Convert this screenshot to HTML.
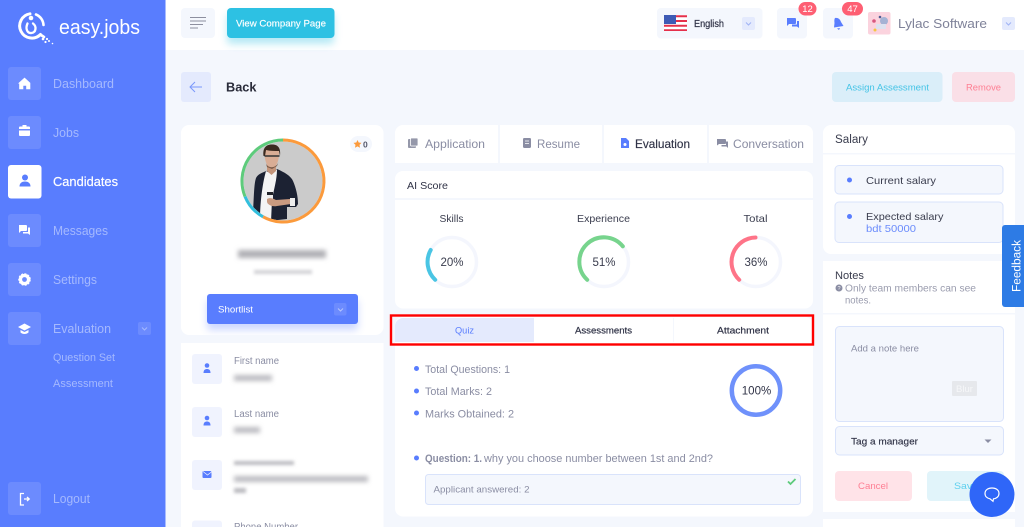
<!DOCTYPE html>
<html><head><meta charset="utf-8"><title>easy.jobs</title>
<style>
html,body{margin:0;padding:0;width:1024px;height:527px;overflow:hidden;background:#f4f7fd}
svg{display:block;font-family:"Liberation Sans",sans-serif}
.s{fill:#a5b9fe;font-size:12.5px}
.g{fill:#8a8da3}
.d{fill:#2f3246}
</style></head><body>
<svg width="1024" height="527" viewBox="0 0 1024 527" xmlns="http://www.w3.org/2000/svg">
<defs>
<filter id="b" x="-40%" y="-200%" width="180%" height="500%"><feGaussianBlur stdDeviation="2.4"/></filter>
<filter id="b1" x="-40%" y="-200%" width="180%" height="500%"><feGaussianBlur stdDeviation="1.6"/></filter>
<filter id="sh" x="-30%" y="-50%" width="160%" height="220%"><feGaussianBlur stdDeviation="4"/></filter>
<clipPath id="av"><circle cx="283" cy="181" r="39.500"/></clipPath>
<clipPath id="fl"><rect x="664" y="15" width="23" height="16"/></clipPath>
</defs>
<rect width="1024" height="527" fill="#f4f7fd"/>
<rect width="1024" height="50" fill="#fff"/>
<!-- sidebar -->
<rect width="165" height="527" fill="#597dfe"/>
<rect x="165" width="1" height="527" fill="#a9bcfd"/>
<g fill="none" stroke="#fff" stroke-linecap="round">
<path d="M30 13.800 A12.200 12.200 0 1 0 40.500 34.500" stroke-width="3"/>
<path d="M36 14.500 A12.200 12.200 0 0 1 43.500 25" stroke-width="2.600"/>
<path d="M27.500 23.500 C25 29 27.500 33.500 31.500 33 C36 32.500 37 26.500 33 23.500" stroke-width="2.300"/>
<path d="M41 35 L44 37" stroke-width="2.600"/>
</g>
<g fill="#fff"><circle cx="31" cy="18" r="2.300"/><circle cx="43" cy="39" r="1.300"/><circle cx="47" cy="39" r="1.100"/><circle cx="45.500" cy="42" r="1.100"/><circle cx="49" cy="41" r="1"/><circle cx="52.500" cy="43.500" r=".8"/></g>
<text x="59" y="34" fill="#fff" font-size="20" textLength="81" lengthAdjust="spacingAndGlyphs">easy.jobs</text>

<g fill="#6c8bfe">
<rect x="8" y="67" width="33" height="33" rx="3"/><rect x="8" y="116" width="33" height="33" rx="3"/>
<rect x="8" y="214" width="33" height="33" rx="3"/><rect x="8" y="263" width="33" height="33" rx="3"/>
<rect x="8" y="312" width="33" height="33" rx="3"/><rect x="8" y="482" width="33" height="33" rx="3"/>
</g>
<rect x="8" y="165" width="33.500" height="33.500" rx="3" fill="#fff"/>
<path d="M24.500 78 L30 83 V89 H26.500 V85.500 H23 V89 H19.500 V83 L18.500 83.500 Z" fill="#fff" stroke="#fff" stroke-width=".6"/>
<path d="M19 129 h11 v-1.500 a1 1 0 0 0 -1 -1 h-2.500 v-1.500 h-4 v1.500 h-2.500 a1 1 0 0 0 -1 1 Z M19 130.500 h11 v4.500 a1 1 0 0 1 -1 1 h-9 a1 1 0 0 1 -1 -1Z" fill="#fff"/>
<circle cx="25" cy="177.500" r="3" fill="#597dfe"/><path d="M19.500 186.500 c0-3.500 2.500-5 5.500-5 s5.500 1.500 5.500 5 Z" fill="#597dfe"/>
<path d="M19 225 h7 a1 1 0 0 1 1 1 v4 a1 1 0 0 1 -1 1 h-5 l-2 2 Z" fill="#fff"/><path d="M28 227.500 h2 v7.500 l-2 -1.500 h-5 v-1.500 h5Z" fill="#fff"/>
<circle cx="24.500" cy="279.500" r="4" fill="none" stroke="#fff" stroke-width="3.200"/><circle cx="24.500" cy="279.500" r="5.500" fill="none" stroke="#fff" stroke-width="1.500" stroke-dasharray="2 1.200"/>
<path d="M24.500 323.500 L31 327 L24.500 330.500 L18 327 Z" fill="#fff"/><path d="M20.500 330 v2.500 c2 2 6 2 8 0 v-2.500 l-4 2 Z" fill="#fff"/>
<path d="M24 493.500 h-3.500 v11.500 h3.500" fill="none" stroke="#fff" stroke-width="1.300"/><path d="M24 499 h5 M27 497 l2.200 2 -2.200 2" fill="none" stroke="#fff" stroke-width="1.300"/>

<text class="s" x="53" y="88" textLength="61" lengthAdjust="spacingAndGlyphs">Dashboard</text>
<text class="s" x="53" y="137" textLength="26" lengthAdjust="spacingAndGlyphs">Jobs</text>
<text x="53" y="186" font-size="12.500" fill="#fff" stroke="#fff" stroke-width=".2" textLength="65" lengthAdjust="spacingAndGlyphs">Candidates</text>
<text class="s" x="53" y="235" textLength="55" lengthAdjust="spacingAndGlyphs">Messages</text>
<text class="s" x="53" y="284" textLength="44" lengthAdjust="spacingAndGlyphs">Settings</text>
<text class="s" x="53" y="333" textLength="58" lengthAdjust="spacingAndGlyphs">Evaluation</text>
<text x="53" y="361" fill="#a5b9fe" font-size="11" textLength="62" lengthAdjust="spacingAndGlyphs">Question Set</text>
<text x="53" y="387" fill="#a5b9fe" font-size="11" textLength="60" lengthAdjust="spacingAndGlyphs">Assessment</text>
<text class="s" x="53" y="503" textLength="37" lengthAdjust="spacingAndGlyphs">Logout</text>
<rect x="138" y="322" width="13" height="13" rx="2" fill="#6c8bfe"/><path d="M142 327.500 l2.500 2.500 2.500-2.500" fill="none" stroke="#a5b9fe"/>

<!-- topbar -->
<rect x="181" y="8" width="34" height="30" rx="4" fill="#f4f7fd"/>
<path d="M190 17.500 h16 M190 21 h16 M190 24.500 h13 M190 28 h8" stroke="#8d8f9f" stroke-width="1.100"/>
<rect x="227" y="14" width="107" height="30" rx="3" fill="#2dc1e3" opacity=".35" filter="url(#sh)"/>
<rect x="227" y="8" width="107.500" height="30" rx="4" fill="#2dc1e3"/>
<text x="236" y="26.500" fill="#fff" stroke="#fff" stroke-width=".15" font-size="9.500" textLength="90" lengthAdjust="spacingAndGlyphs">View Company Page</text>

<rect x="657" y="8" width="105.500" height="30.500" rx="4" fill="#f4f7fd"/>
<g clip-path="url(#fl)"><rect x="664" y="15" width="23" height="16" fill="#fff"/>
<path d="M664 16.200 h23 M664 21 h23 M664 25.800 h23 M664 30.200 h23" stroke="#e5304b" stroke-width="2"/>
<rect x="664" y="15" width="12" height="9" fill="#3e5bb5"/></g>
<text x="694" y="27" class="d" stroke="#2f3246" stroke-width=".2" font-size="10" textLength="30" lengthAdjust="spacingAndGlyphs">English</text>
<rect x="742" y="17" width="13" height="13" rx="2" fill="#e4eafd"/><path d="M746 22.500 l2.500 2.500 2.500-2.500" fill="none" stroke="#9fb3f5"/>

<rect x="777" y="8" width="30" height="30.500" rx="4" fill="#f4f7fd"/>
<path d="M787 18 h8 a1 1 0 0 1 1 1 v4 a1 1 0 0 1 -1 1 h-6 l-2 2 Z" fill="#597dfe"/><path d="M797 21 h2 v7 l-2-1.500 h-5 v-2 h5Z" fill="#597dfe"/>
<rect x="823" y="8" width="30" height="30.500" rx="4" fill="#f4f7fd"/>
<path d="M835 18 c3-.5 5 1 6 4 l2.500 4 -9.500 1.500 .5-4.500 c-.3-2 -.2-4 .5-5Z M837 28.500 l3-.5 -1 2Z" fill="#597dfe"/>
<rect x="798.500" y="2" width="18" height="13.500" rx="6.700" fill="#fe5f73"/>
<text x="807.500" y="12" fill="#fff" font-size="9.500" text-anchor="middle">12</text>
<rect x="842" y="2" width="21" height="13.500" rx="6.700" fill="#fe5f73"/>
<text x="852.500" y="12" fill="#fff" font-size="9.500" text-anchor="middle">47</text>
<rect x="868" y="12" width="22.500" height="22.500" rx="2" fill="#fbd3de"/>
<circle cx="884" cy="21" r="4" fill="#a5b2d4"/><circle cx="874" cy="21" r="1.800" fill="#d9587f"/><rect x="876" y="24" width="10" height="5" fill="#dde2f0"/><circle cx="875" cy="30" r="1.500" fill="#f5c542"/><circle cx="880" cy="17" r="1.300" fill="#4f5b93"/>
<text x="898" y="28" fill="#7f8299" font-size="13" textLength="89" lengthAdjust="spacingAndGlyphs">Lylac Software</text>
<rect x="1002" y="17" width="13" height="13" rx="2" fill="#e4eafd"/><path d="M1006 22.500 l2.500 2.500 2.500-2.500" fill="none" stroke="#9fb3f5"/>

<!-- back row -->
<rect x="181" y="72" width="30" height="30" rx="3" fill="#e4eafd"/>
<path d="M190 87 H202 M195 82 L190 87 L195 92" fill="none" stroke="#7a98fb" stroke-width="1"/>
<text x="226" y="91.500" fill="#2a2c3a" font-size="13" font-weight="bold" textLength="30.500" lengthAdjust="spacingAndGlyphs">Back</text>
<rect x="832" y="72" width="110.500" height="30" rx="4" fill="#daeef9"/>
<text x="846" y="90.500" fill="#45c4e6" font-size="9.500" textLength="83" lengthAdjust="spacingAndGlyphs">Assign Assessment</text>
<rect x="952" y="72" width="63" height="30" rx="4" fill="#fadfe7"/>
<text x="966" y="90.500" fill="#fe7f93" font-size="9.500" textLength="35" lengthAdjust="spacingAndGlyphs">Remove</text>

<!-- left cards -->
<rect x="181" y="125" width="202.500" height="210" rx="8" fill="#fff"/>
<rect x="350" y="136" width="22" height="16" rx="8" fill="#f4f7fd"/>
<path d="M357.500 140 l1.200 2.500 2.800.4 -2 2 .5 2.800 -2.500-1.300 -2.500 1.300 .5-2.800 -2-2 2.800-.4Z" fill="#fb9a3c"/>
<text x="363" y="147.500" fill="#55586b" font-size="8.500" font-weight="bold">0</text>

<circle cx="283" cy="181" r="39.500" fill="#cbcbcb"/>
<g clip-path="url(#av)">
<!-- jacket -->
<path d="M253 212 C254 195 254 184 256 178 C258 174 262 173 266 171 L277 169 C284 172 291 176 293 181 C296 188 298 196 298 204 L296 207 L287 207 L287 219 L260 222 Z" fill="#1c2233"/>
<!-- shirt -->
<path d="M266 171 L272 174 L277 169 C277 180 274 188 272 200 L271 222 L260 218 C260 205 262 185 266 171Z" fill="#f4f4f4"/>
<!-- cup -->
<rect x="267" y="194" width="6" height="10" fill="#ededed"/><rect x="267" y="192" width="6" height="3" fill="#23242a"/>
<!-- hand/forearm -->
<path d="M267 199 C270 197 274 199 276 200 L290 199 L291 204 L277 206 C272 207 268 205 267 202Z" fill="#c99a80"/>
<rect x="290" y="198" width="5" height="8" fill="#ededed"/>
</g>
<!-- neck & head -->
<path d="M267 165 h9 v6 l-4.500 4 -4.500-4Z" fill="#c4957b"/>
<path d="M264.500 153 C264.500 148 268 146 272 146 C276 146 279.500 148 279 154 C279 161 276 168 271.500 168 C267.500 168 264.500 161 264.500 153Z" fill="#d9ad95"/>
<path d="M263.500 156 C262.500 148 266 144.500 272 144.500 C278 144.500 281 148 280 156 L279 151 C275 151 270 151 266 150 L265 156Z" fill="#3b2a20"/>
<path d="M265.500 162 C267 169 276 169 278.500 162 L277 166 L272 169 L267 167Z" fill="#7a5a48"/>
<path d="M264.500 156 h15" stroke="#333" stroke-width="1.500"/>
<g fill="none" stroke-width="3">
<path d="M283 140 A41 41 0 1 1 263 216.800" stroke="#fb9a3c"/>
<path d="M263 216.800 A41 41 0 0 1 245 196.500" stroke="#33bfdd"/>
<path d="M245 196.500 A41 41 0 0 1 283 140" stroke="#5ecb7c"/>
</g>

<rect x="238" y="250" width="88" height="8" fill="#b0b0b5" filter="url(#b)"/>
<rect x="254" y="270" width="58" height="4" fill="#d2d2d6" filter="url(#b1)"/>
<rect x="207" y="300" width="151" height="30" rx="3" fill="#597dfe" opacity=".3" filter="url(#sh)"/>
<rect x="207" y="294" width="151" height="30" rx="3" fill="#597dfe"/>
<text x="218" y="312.500" fill="#fff" font-size="9.500" textLength="35" lengthAdjust="spacingAndGlyphs">Shortlist</text>
<rect x="334" y="303" width="12.500" height="12.500" rx="2" fill="#6c8bfe"/><path d="M338 308.500 l2.500 2.500 2.500-2.500" fill="none" stroke="#b4c4fe"/>
<rect x="181" y="335" width="203" height="8" fill="#f4f7fd"/>
<rect x="181" y="343" width="202.500" height="190" fill="#fff"/>

<g fill="#f0f3fe"><rect x="192" y="354" width="30" height="30" rx="3"/><rect x="192" y="407" width="30" height="30" rx="3"/><rect x="192" y="460" width="30" height="30" rx="3"/><rect x="192" y="520.500" width="30" height="30" rx="3"/></g>
<g fill="#597dfe">
<circle cx="207" cy="365.500" r="2.300"/><path d="M203.500 373 c0-3 1.500-4 3.500-4 s3.500 1 3.500 4Z"/>
<circle cx="207" cy="418" r="2.300"/><path d="M203.500 425.500 c0-3 1.500-4 3.500-4 s3.500 1 3.500 4Z"/>
<rect x="202.500" y="471" width="9" height="7" rx="1"/>
</g>
<path d="M203 471.500 l4.500 3.500 4.500-3.500" fill="none" stroke="#f0f3fe" stroke-width=".7"/>
<text x="234" y="364" class="g" font-size="10" textLength="45" lengthAdjust="spacingAndGlyphs">First name</text>
<text x="234" y="417" class="g" font-size="10" textLength="45" lengthAdjust="spacingAndGlyphs">Last name</text>
<text x="234" y="530" class="g" font-size="10" textLength="64" lengthAdjust="spacingAndGlyphs">Phone Number</text>
<g fill="#bcbcc1">
<rect x="234" y="375" width="38" height="6" filter="url(#b)"/>
<rect x="234" y="427" width="26" height="6" filter="url(#b)"/>
<rect x="234" y="461" width="60" height="4" filter="url(#b1)"/>
<rect x="234" y="476" width="134" height="6" filter="url(#b)"/>
<rect x="234" y="488" width="12" height="5" filter="url(#b1)"/>
</g>

<!-- tabs -->
<path d="M395 133 a8 8 0 0 1 8-8 h95 v38 h-103Z" fill="#fff"/>
<rect x="500" y="125" width="102" height="38" fill="#fff"/>
<rect x="604" y="125" width="103" height="38" fill="#fff"/>
<path d="M709 125 h96 a8 8 0 0 1 8 8 v30 h-104Z" fill="#fff"/>
<rect x="408" y="139" width="8" height="9" rx="1" fill="#9598aa"/><rect x="410.500" y="138" width="7.500" height="8" rx="1" fill="#9598aa" stroke="#fff" stroke-width=".8"/>
<rect x="523" y="138" width="8" height="10" rx="1.200" fill="#8a8da3"/><path d="M525 141 h4 M525 143.500 h4" stroke="#fff" stroke-width=".7"/>
<path d="M621 138 h5 l3 3 v7 h-8Z" fill="#597dfe"/><circle cx="625" cy="144.500" r="1.500" fill="#fff"/>
<path d="M717 139 h8 a1 1 0 0 1 1 1 v3 a1 1 0 0 1-1 1 h-6 l-2 1.500Z" fill="#8a8da3"/><path d="M726 141.500 h2 v6.500 l-1.500-1.500 h-5 v-1.500 h4.500Z" fill="#8a8da3"/>
<text x="425" y="148" class="g" font-size="12" textLength="60" lengthAdjust="spacingAndGlyphs">Application</text>
<text x="537" y="148" class="g" font-size="12" textLength="43" lengthAdjust="spacingAndGlyphs">Resume</text>
<text x="635" y="148" class="d" stroke="#2f3246" stroke-width=".15" font-size="12" textLength="55" lengthAdjust="spacingAndGlyphs">Evaluation</text>
<text x="733" y="148" class="g" font-size="12" textLength="71" lengthAdjust="spacingAndGlyphs">Conversation</text>

<!-- AI score -->
<rect x="395" y="171" width="418" height="137.500" rx="8" fill="#fff"/>
<rect x="395" y="198" width="418" height="2" fill="#f4f7fd"/>
<text x="407" y="189" fill="#2f3246" font-size="10.500" textLength="41" lengthAdjust="spacingAndGlyphs">AI Score</text>
<text x="451.500" y="222" fill="#3a3d4e" font-size="10.500" text-anchor="middle" textLength="24" lengthAdjust="spacingAndGlyphs">Skills</text>
<text x="603.500" y="222" fill="#3a3d4e" font-size="10.500" text-anchor="middle" textLength="53" lengthAdjust="spacingAndGlyphs">Experience</text>
<text x="755.500" y="222" fill="#3a3d4e" font-size="10.500" text-anchor="middle" textLength="24" lengthAdjust="spacingAndGlyphs">Total</text>
<g fill="none" stroke="#f4f6fd" stroke-width="3.500"><circle cx="452" cy="262" r="24.500"/><circle cx="604" cy="262" r="24.500"/><circle cx="756" cy="262" r="24.500"/></g>
<g fill="none" stroke-width="4" stroke-linecap="round">
<path d="M435.200 279.800 A24.500 24.500 0 0 1 430.700 250" stroke="#4ac5e4"/>
<path d="M587.200 279.800 A24.500 24.500 0 1 1 622.800 246.300" stroke="#77d48d"/>
<path d="M739.200 279.800 A24.500 24.500 0 0 1 755.500 237.500" stroke="#fe7488"/>
</g>
<text x="452" y="266" fill="#3a3d4e" font-size="11.500" text-anchor="middle">20%</text>
<text x="604" y="266" fill="#3a3d4e" font-size="11.500" text-anchor="middle">51%</text>
<text x="756" y="266" fill="#3a3d4e" font-size="11.500" text-anchor="middle">36%</text>

<!-- quiz -->
<rect x="395" y="317" width="418" height="199.500" rx="8" fill="#fff"/>
<path d="M395 342 v-16 a8 8 0 0 1 8-8 h131 v24Z" fill="#e4eafd"/>
<rect x="673" y="318" width="1" height="24" fill="#f4f7fd"/>
<rect x="391" y="315.500" width="422" height="29" fill="none" stroke="#f00" stroke-width="2.400"/>
<text x="455" y="333.500" fill="#597dfe" font-size="9.500" textLength="19" lengthAdjust="spacingAndGlyphs">Quiz</text>
<text x="575" y="333.500" fill="#2f3246" stroke="#2f3246" stroke-width=".2" font-size="9.500" textLength="57" lengthAdjust="spacingAndGlyphs">Assessments</text>
<text x="717" y="333.500" fill="#2f3246" stroke="#2f3246" stroke-width=".2" font-size="9.500" textLength="52" lengthAdjust="spacingAndGlyphs">Attachment</text>
<g fill="#597dfe"><circle cx="416.500" cy="368.500" r="2.500"/><circle cx="416.500" cy="391" r="2.500"/><circle cx="416.500" cy="413" r="2.500"/><circle cx="416.500" cy="458" r="2.500"/></g>
<text x="425" y="373" class="g" font-size="11" textLength="85" lengthAdjust="spacingAndGlyphs">Total Questions: 1</text>
<text x="425" y="395" class="g" font-size="11" textLength="67" lengthAdjust="spacingAndGlyphs">Total Marks: 2</text>
<text x="425" y="417.500" class="g" font-size="11" textLength="89" lengthAdjust="spacingAndGlyphs">Marks Obtained: 2</text>
<text x="425" y="462" class="g" font-size="11" font-weight="bold" textLength="57" lengthAdjust="spacingAndGlyphs">Question: 1.</text>
<text x="484" y="462" class="g" font-size="11" textLength="229" lengthAdjust="spacingAndGlyphs">why you choose number between 1st and 2nd?</text>
<circle cx="756" cy="390.500" r="24.200" fill="none" stroke="#6f91fb" stroke-width="4.500"/>
<text x="756.500" y="394.500" fill="#2f3246" font-size="11.500" text-anchor="middle">100%</text>
<rect x="425.500" y="474.500" width="375" height="30" rx="3" fill="#f4f7fd" stroke="#d9e3fb"/>
<text x="433.500" y="492.500" class="g" font-size="9.500" textLength="96" lengthAdjust="spacingAndGlyphs">Applicant answered: 2</text>
<path d="M788 481.500 l2.500 2.500 5-5" fill="none" stroke="#5ecb7c" stroke-width="1.800"/>

<!-- right -->
<rect x="823" y="125" width="192" height="129" rx="8" fill="#fff"/>
<rect x="823" y="153" width="192" height="1.500" fill="#f4f7fd"/>
<text x="835" y="143" fill="#3a3d4e" font-size="11.500" textLength="33" lengthAdjust="spacingAndGlyphs">Salary</text>
<rect x="835" y="165.500" width="168" height="28.500" rx="4" fill="#f4f7fd" stroke="#d9e3fb"/>
<rect x="835" y="202" width="168" height="40.500" rx="4" fill="#f4f7fd" stroke="#d9e3fb"/>
<circle cx="849.500" cy="180" r="2.500" fill="#597dfe"/><circle cx="849.500" cy="216.500" r="2.500" fill="#597dfe"/>
<text x="866" y="184" fill="#3a3d4e" font-size="10.500" textLength="70" lengthAdjust="spacingAndGlyphs">Current salary</text>
<text x="866" y="220" fill="#3a3d4e" font-size="10.500" textLength="77.500" lengthAdjust="spacingAndGlyphs">Expected salary</text>
<text x="866" y="232" fill="#6b8cfc" font-size="10.500" textLength="50" lengthAdjust="spacingAndGlyphs">bdt 50000</text>

<rect x="823" y="261" width="192" height="251" fill="#fff"/>
<rect x="823" y="313" width="192" height="1.500" fill="#f4f7fd"/>
<text x="835" y="279" fill="#3a3d4e" font-size="11" textLength="29" lengthAdjust="spacingAndGlyphs">Notes</text>
<circle cx="839" cy="288" r="3.500" fill="#8a8da3"/><text x="839" y="290" fill="#fff" font-size="5.500" text-anchor="middle">?</text>
<text x="845" y="291.500" fill="#9a9cae" font-size="10" textLength="131" lengthAdjust="spacingAndGlyphs">Only team members can see</text>
<text x="845" y="303.500" fill="#9a9cae" font-size="10" textLength="26" lengthAdjust="spacingAndGlyphs">notes.</text>
<rect x="835.500" y="326.500" width="168" height="95" rx="4" fill="#f4f7fd" stroke="#d9e3fb"/>
<text x="851" y="351.500" class="g" font-size="9.500" textLength="68" lengthAdjust="spacingAndGlyphs">Add a note here</text>
<rect x="952" y="381" width="25" height="15" rx="1" fill="#e6e8ec"/>
<text x="964.500" y="392" fill="#f6f7f9" font-size="9.500" text-anchor="middle">Blur</text>
<rect x="835.500" y="426.500" width="168" height="28.500" rx="4" fill="#f4f7fd" stroke="#d9e3fb"/>
<text x="851" y="444.500" fill="#2f3246" stroke="#2f3246" stroke-width=".15" font-size="9.500" textLength="67" lengthAdjust="spacingAndGlyphs">Tag a manager</text>
<path d="M984.500 439.500 h7 l-3.500 3.500Z" fill="#8a8da3"/>
<rect x="835" y="471" width="77" height="30" rx="4" fill="#ffe3e8"/>
<text x="858" y="489" fill="#fe7f93" font-size="9.500" textLength="30" lengthAdjust="spacingAndGlyphs">Cancel</text>
<rect x="927" y="471" width="77" height="30" rx="4" fill="#e1f4fa"/>
<text x="954" y="489" fill="#5fd0ee" font-size="9.500" textLength="24" lengthAdjust="spacingAndGlyphs">Save</text>
<rect x="823" y="519" width="192" height="10" fill="#fff"/>

<path d="M1024 225 h-19 a3 3 0 0 0 -3 3 v76 a3 3 0 0 0 3 3 h19Z" fill="#2d7be5"/>
<text transform="translate(1020.500 266) rotate(-90)" fill="#fff" font-size="11.500" text-anchor="middle" textLength="52" lengthAdjust="spacingAndGlyphs">Feedback</text>
<circle cx="992" cy="494.500" r="22.500" fill="#2f66f8"/>
<path d="M992 488 c4 0 7 2 7 5.500 c0 3-2.500 5-5.500 5.300 l-.5 2.500 -3-2.500 c-3-.5-5-2.500-5-5.300 c0-3.500 3-5.500 7-5.500Z" fill="none" stroke="#fff" stroke-width="1.200"/>
</svg>
</body></html>
